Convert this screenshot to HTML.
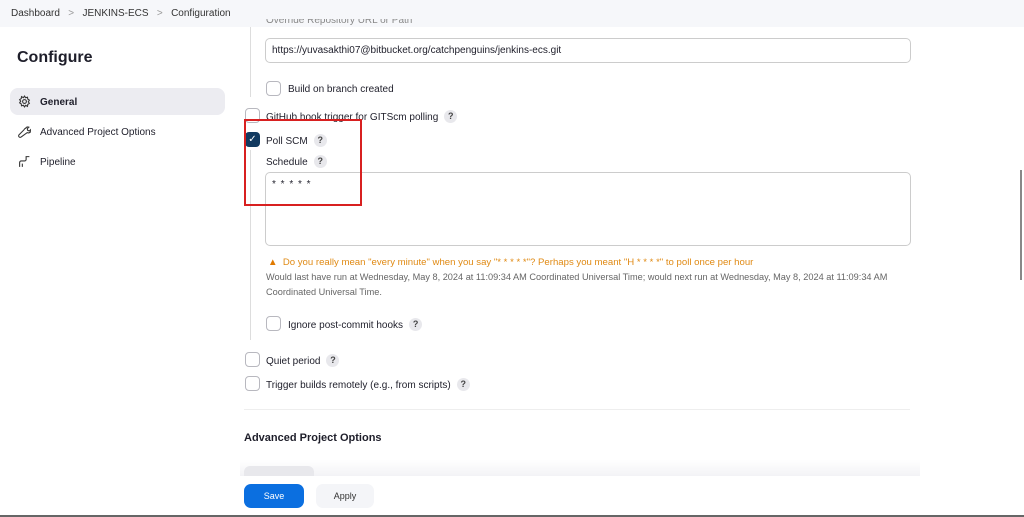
<!DOCTYPE html><html><head><style>
body{margin:0;width:1024px;height:517px;background:#fff;font-family:"Liberation Sans",sans-serif;color:#1e1e2a;position:relative;overflow:hidden}
.a{position:absolute;white-space:nowrap}
.cb{position:absolute;width:13px;height:13px;border:1.5px solid #b8b8bf;border-radius:4px;background:#fff}
.q{display:inline-block;width:13px;height:13px;border-radius:50%;background:#e8e8ec;font-size:9px;font-weight:bold;text-align:center;line-height:13px;color:#444;margin-left:6px;vertical-align:1px}
.t{font-size:10px}
</style></head><body>
<div class="a" style="left:0;top:0;width:1024px;height:27px;background:#f6f7fa"></div>
<div class="a t" style="left:11px;top:8px;color:#333">Dashboard &nbsp;&nbsp;<span style="color:#999">&gt;</span>&nbsp;&nbsp; JENKINS-ECS &nbsp;&nbsp;<span style="color:#999">&gt;</span>&nbsp;&nbsp; Configuration</div>
<div class="a" style="left:17px;top:49px;font-size:16px;font-weight:bold">Configure</div>
<div class="a" style="left:10px;top:88px;width:215px;height:27px;background:#ececf1;border-radius:8px"></div>
<svg class="a" style="left:18px;top:95px" width="13" height="13" viewBox="0 0 24 24" fill="none" stroke="#333" stroke-width="2"><circle cx="12" cy="12" r="3.5"/><path d="M12 2l2 3 3.5-1 .5 3.5 3 2-2 3 2 3-3 2-.5 3.5L14 19l-2 3-2-3-3.5 1-.5-3.5-3-2 2-3-2-3 3-2 .5-3.5L10 5z"/></svg>
<div class="a t" style="left:40px;top:97px;font-weight:bold">General</div>
<svg class="a" style="left:18px;top:125px" width="13" height="13" viewBox="0 0 24 24" fill="none" stroke="#333" stroke-width="2"><path d="M14 6a5 5 0 016-2l-3 3 1 3 3 1 3-3a5 5 0 01-7 6L6 22a2 2 0 01-4-4l9-9a5 5 0 013-3z"/></svg>
<div class="a t" style="left:40px;top:127px">Advanced Project Options</div>
<svg class="a" style="left:18px;top:155px" width="13" height="13" viewBox="0 0 24 24" fill="none" stroke="#333" stroke-width="2"><path d="M3 22V14a3 3 0 013-3h6a3 3 0 003-3V3h6M8 22v-6"/></svg>
<div class="a t" style="left:40px;top:157px">Pipeline</div>
<div class="a" style="left:250px;top:27px;width:1px;height:70px;background:#ddd"></div>
<div class="a" style="left:250px;top:150px;width:1px;height:190px;background:#ddd"></div>
<div class="a t" style="left:266px;top:19px;color:#888;height:8px;overflow:hidden;line-height:4px">Override Repository URL or Path</div>
<div class="a" style="left:265px;top:38px;width:644px;height:23px;border:1px solid #ccc;border-radius:5px"></div>
<div class="a t" style="left:272px;top:45px">https://yuvasakthi07@bitbucket.org/catchpenguins/jenkins-ecs.git</div>
<div class="cb" style="left:266px;top:81px"></div><div class="a t" style="left:288px;top:84px">Build on branch created</div>
<div class="cb" style="left:245px;top:108px"></div><div class="a t" style="left:266px;top:110px">GitHub hook trigger for GITScm polling<span class="q">?</span></div>
<div class="a" style="left:245px;top:132px;width:15px;height:15px;border-radius:4px;background:#123a60;color:#fff;font-size:10px;text-align:center;line-height:15px">✓</div>
<div class="a t" style="left:266px;top:134px">Poll SCM<span class="q">?</span></div>
<div class="a t" style="left:266px;top:155px">Schedule<span class="q">?</span></div>
<div class="a" style="left:265px;top:172px;width:644px;height:72px;border:1px solid #ccc;border-radius:5px"></div>
<div class="a t" style="left:272px;top:179px;letter-spacing:1px">* * * * *</div>
<div class="a" style="left:244px;top:119px;width:114px;height:83px;border:2px solid #d82020"></div>
<div class="a" style="left:268px;top:257px;font-size:9.6px;color:#e08a14"><span style="color:#e07a00">▲</span> &nbsp;Do you really mean "every minute" when you say "* * * * *"? Perhaps you meant "H * * * *" to poll once per hour</div>
<div class="a" style="left:266px;top:270px;font-size:9.2px;color:#666;line-height:15px">Would last have run at Wednesday, May 8, 2024 at 11:09:34 AM Coordinated Universal Time; would next run at Wednesday, May 8, 2024 at 11:09:34 AM<br>Coordinated Universal Time.</div>
<div class="cb" style="left:266px;top:316px"></div><div class="a t" style="left:288px;top:318px">Ignore post-commit hooks<span class="q">?</span></div>
<div class="cb" style="left:245px;top:352px"></div><div class="a t" style="left:266px;top:354px">Quiet period<span class="q">?</span></div>
<div class="cb" style="left:245px;top:376px"></div><div class="a t" style="left:266px;top:378px">Trigger builds remotely (e.g., from scripts)<span class="q">?</span></div>
<div class="a" style="left:244px;top:409px;width:666px;height:1px;background:#eee"></div>
<div class="a" style="left:244px;top:432px;font-size:11px;font-weight:bold">Advanced Project Options</div>
<div class="a" style="left:240px;top:460px;width:680px;height:16px;background:linear-gradient(#fff,#f3f3f6)"></div>
<div class="a" style="left:244px;top:466px;width:70px;height:10px;background:#e8e8ec;border-radius:6px 6px 0 0"></div>
<div class="a" style="left:244px;top:484px;width:60px;height:24px;background:#0b6fe0;border-radius:7px;color:#fff;font-size:9px;text-align:center;line-height:24px">Save</div>
<div class="a" style="left:316px;top:484px;width:58px;height:24px;background:#f4f5f8;border-radius:7px;color:#333;font-size:9px;text-align:center;line-height:24px">Apply</div>
<div class="a" style="left:1020px;top:170px;width:2px;height:110px;background:#888"></div>
<div class="a" style="left:0;top:515px;width:1024px;height:2px;background:#666"></div>
</body></html>
